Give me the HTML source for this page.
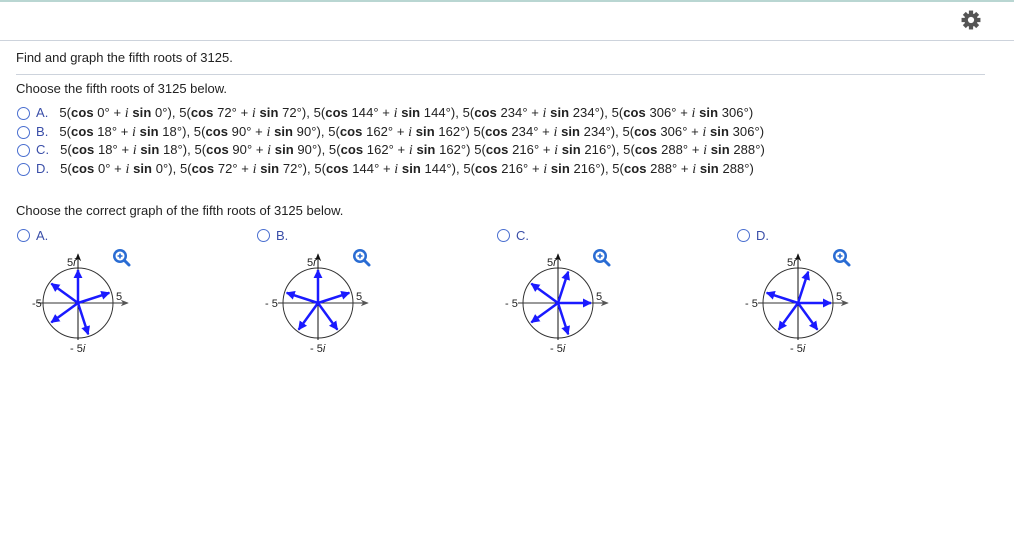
<!DOCTYPE html><html><head><style>
body{margin:0;width:1024px;height:535px;background:#fff;font-family:"Liberation Sans",sans-serif;font-size:13px;color:#222;position:relative;overflow:hidden}
.a{position:absolute;white-space:nowrap}
.o{letter-spacing:0.05px}
.r{position:absolute;width:11px;height:11px;border:1.3px solid #4a6fd0;border-radius:50%}
.l{color:#3a4ea8}
i{font-family:"Liberation Serif",serif;font-size:14px}
b{font-weight:bold}
svg text{font-family:"Liberation Sans",sans-serif;font-size:11px;fill:#222}
</style></head><body>
<div class="a" style="left:0;top:0;width:1014px;height:2px;background:#b9d6d2"></div>
<svg class="a" style="left:961px;top:10px" width="20" height="20" viewBox="-9 -9 18 18"><g fill="#555"><rect x="-1.9" y="-8.5" width="3.8" height="17"/><rect x="-1.9" y="-8.5" width="3.8" height="17" transform="rotate(45)"/><rect x="-1.9" y="-8.5" width="3.8" height="17" transform="rotate(90)"/><rect x="-1.9" y="-8.5" width="3.8" height="17" transform="rotate(135)"/><circle r="6"/></g><circle r="2.8" fill="#fff"/></svg>
<div class="a" style="left:0;top:40px;width:1014px;height:1px;background:#cdd3dc"></div>
<div class="a" style="left:16px;top:50px">Find and graph the fifth roots of 3125.</div>
<div class="a" style="left:16px;top:74px;width:969px;height:1px;background:#cdd3dc"></div>
<div class="a" style="left:16px;top:81px">Choose the fifth roots of 3125 below.</div>

<div class="r" style="left:17px;top:107px"></div><div class="a o" style="left:36px;top:105px"><span class="l">A.</span>&nbsp;&nbsp;&nbsp;5(<b>cos</b> 0° + <i>i</i> <b>sin</b> 0°), 5(<b>cos</b> 72° + <i>i</i> <b>sin</b> 72°), 5(<b>cos</b> 144° + <i>i</i> <b>sin</b> 144°), 5(<b>cos</b> 234° + <i>i</i> <b>sin</b> 234°), 5(<b>cos</b> 306° + <i>i</i> <b>sin</b> 306°)</div>
<div class="r" style="left:17px;top:126px"></div><div class="a o" style="left:36px;top:124px"><span class="l">B.</span>&nbsp;&nbsp;&nbsp;5(<b>cos</b> 18° + <i>i</i> <b>sin</b> 18°), 5(<b>cos</b> 90° + <i>i</i> <b>sin</b> 90°), 5(<b>cos</b> 162° + <i>i</i> <b>sin</b> 162°) 5(<b>cos</b> 234° + <i>i</i> <b>sin</b> 234°), 5(<b>cos</b> 306° + <i>i</i> <b>sin</b> 306°)</div>
<div class="r" style="left:17px;top:144px"></div><div class="a o" style="left:36px;top:142px"><span class="l">C.</span>&nbsp;&nbsp;&nbsp;5(<b>cos</b> 18° + <i>i</i> <b>sin</b> 18°), 5(<b>cos</b> 90° + <i>i</i> <b>sin</b> 90°), 5(<b>cos</b> 162° + <i>i</i> <b>sin</b> 162°) 5(<b>cos</b> 216° + <i>i</i> <b>sin</b> 216°), 5(<b>cos</b> 288° + <i>i</i> <b>sin</b> 288°)</div>
<div class="r" style="left:17px;top:163px"></div><div class="a o" style="left:36px;top:161px"><span class="l">D.</span>&nbsp;&nbsp;&nbsp;5(<b>cos</b> 0° + <i>i</i> <b>sin</b> 0°), 5(<b>cos</b> 72° + <i>i</i> <b>sin</b> 72°), 5(<b>cos</b> 144° + <i>i</i> <b>sin</b> 144°), 5(<b>cos</b> 216° + <i>i</i> <b>sin</b> 216°), 5(<b>cos</b> 288° + <i>i</i> <b>sin</b> 288°)</div>

<div class="a" style="left:16px;top:203px">Choose the correct graph of the fifth roots of 3125 below.</div>
<div class="r" style="left:17px;top:229px"></div><div class="a l" style="left:36px;top:228px">A.</div>
<div class="r" style="left:257px;top:229px"></div><div class="a l" style="left:276px;top:228px">B.</div>
<div class="r" style="left:497px;top:229px"></div><div class="a l" style="left:516px;top:228px">C.</div>
<div class="r" style="left:737px;top:229px"></div><div class="a l" style="left:756px;top:228px">D.</div>

<svg width="0" height="0" style="position:absolute"><defs>
<marker id="bh" viewBox="0 0 10 10" refX="9" refY="5" markerWidth="3.6" markerHeight="3.6" orient="auto"><path d="M0 0L10 5L0 10z" fill="#1a1aff"/></marker>
<marker id="gh" viewBox="0 0 10 10" refX="9" refY="5" markerWidth="8" markerHeight="8" orient="auto"><path d="M0 1L10 5L0 9L3 5z" fill="#555"/></marker>
<marker id="kh" viewBox="0 0 10 10" refX="9" refY="5" markerWidth="8" markerHeight="8" orient="auto"><path d="M0 1L10 5L0 9L3 5z" fill="#111"/></marker>
<g id="base">
<circle cx="58" cy="63" r="35" fill="none" stroke="#333" stroke-width="1"/>
<line x1="18" y1="63" x2="108" y2="63" stroke="#333" stroke-width="1" marker-end="url(#gh)"/>
<line x1="58" y1="100" x2="58" y2="14" stroke="#111" stroke-width="1" marker-end="url(#kh)"/>
<text x="47" y="26">5<tspan font-style="italic">i</tspan></text>
<text x="96" y="60">5</text>
<text x="50" y="112">- 5<tspan font-style="italic">i</tspan></text>
<circle cx="100" cy="16" r="7" fill="#2a6cd3"/><circle cx="100" cy="16" r="4.5" fill="#fff"/>
<path d="M97.5 16h5M100 13.5v5" stroke="#2a6cd3" stroke-width="1.6"/>
<path d="M105 21l4 4" stroke="#2a6cd3" stroke-width="3" stroke-linecap="round"/>
</g></defs></svg>

<svg class="a" style="left:20px;top:240px" width="120" height="115"><use href="#base"/><text x="12" y="67">-5</text>
<g stroke="#1a1aff" stroke-width="2.5" marker-end="url(#bh)"><line x1="58" y1="63" x2="89.4" y2="52.8"/><line x1="58" y1="63" x2="58" y2="30"/><line x1="58" y1="63" x2="31.3" y2="43.6"/><line x1="58" y1="63" x2="31.3" y2="82.4"/><line x1="58" y1="63" x2="68.2" y2="94.4"/></g></svg>
<svg class="a" style="left:260px;top:240px" width="120" height="115"><use href="#base"/><text x="5" y="67">- 5</text>
<g stroke="#1a1aff" stroke-width="2.5" marker-end="url(#bh)"><line x1="58" y1="63" x2="89.4" y2="52.8"/><line x1="58" y1="63" x2="58" y2="30"/><line x1="58" y1="63" x2="26.6" y2="52.8"/><line x1="58" y1="63" x2="38.6" y2="89.7"/><line x1="58" y1="63" x2="77.4" y2="89.7"/></g></svg>
<svg class="a" style="left:500px;top:240px" width="120" height="115"><use href="#base"/><text x="5" y="67">- 5</text>
<g stroke="#1a1aff" stroke-width="2.5" marker-end="url(#bh)"><line x1="58" y1="63" x2="91" y2="63"/><line x1="58" y1="63" x2="68.2" y2="31.6"/><line x1="58" y1="63" x2="31.3" y2="43.6"/><line x1="58" y1="63" x2="31.3" y2="82.4"/><line x1="58" y1="63" x2="68.2" y2="94.4"/></g></svg>
<svg class="a" style="left:740px;top:240px" width="120" height="115"><use href="#base"/><text x="5" y="67">- 5</text>
<g stroke="#1a1aff" stroke-width="2.5" marker-end="url(#bh)"><line x1="58" y1="63" x2="91" y2="63"/><line x1="58" y1="63" x2="68.2" y2="31.6"/><line x1="58" y1="63" x2="26.6" y2="52.8"/><line x1="58" y1="63" x2="38.6" y2="89.7"/><line x1="58" y1="63" x2="77.4" y2="89.7"/></g></svg>
</body></html>
